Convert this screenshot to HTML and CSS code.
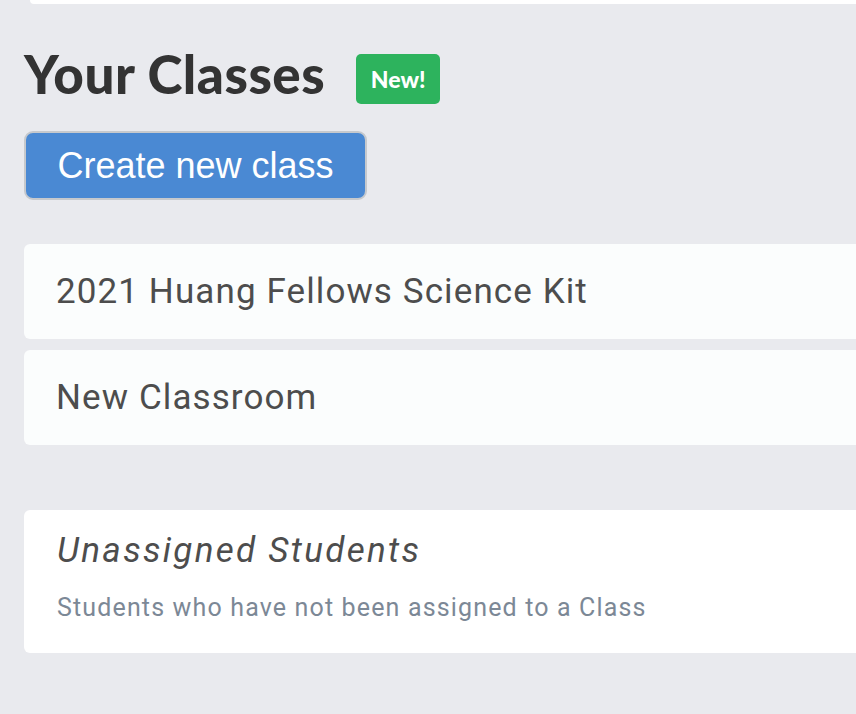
FILE: index.html
```html
<!DOCTYPE html>
<html lang="en">
<head>
<meta charset="utf-8">
<title>Your Classes</title>
<link rel="stylesheet" href="styles.css">
</head>
<body>
<div class="page">
  <div class="top-card"></div>
  <div class="title-row">
    <h1 class="title">Your Classes</h1>
    <span class="badge">New!</span>
  </div>
  <button class="create-btn">Create new class</button>
  <div class="class-list">
    <div class="class-card"><span class="class-name">2021 Huang Fellows Science Kit</span></div>
    <div class="class-card"><span class="class-name">New Classroom</span></div>
  </div>
  <div class="unassigned-card">
    <div class="unassigned-title">Unassigned Students</div>
    <div class="unassigned-sub">Students who have not been assigned to a Class</div>
  </div>
</div>
</body>
</html>
```

FILE: styles.css
```css
html, body {
  margin: 0;
  padding: 0;
  background: #e9eaee;
  overflow: hidden;
}
body {
  width: 856px;
  height: 714px;
  font-family: Roboto, "Open Sans", sans-serif;
}
.page {
  width: 900px;
  padding-left: 24px;
  box-sizing: border-box;
  display: flex;
  flex-direction: column;
  align-items: flex-start;
}
.top-card {
  align-self: stretch;
  height: 4px;
  margin-left: 6px;
  background: #ffffff;
  border-radius: 0 0 0 6px;
}
.title-row {
  display: flex;
  align-items: flex-start;
  gap: 31px;
  margin-top: 50px;
  height: 50px;
}
.title {
  margin: -5px 0 0 0;
  font-family: Lato, sans-serif;
  font-weight: 900;
  font-size: 53px;
  line-height: 50px;
  color: #333333;
  letter-spacing: 0.5px;
}
.badge {
  display: inline-flex;
  align-items: center;
  justify-content: center;
  width: 84px;
  height: 50px;
  border-radius: 5px;
  background: #2db35d;
  color: #ffffff;
  font-family: Lato, sans-serif;
  font-weight: 900;
  font-size: 23px;
}
.create-btn {
  margin-top: 27px;
  width: 343px;
  height: 69px;
  padding: 0;
  border: 2px solid #c6c9cd;
  border-radius: 9px;
  background: #4a89d3;
  color: #ffffff;
  font-family: "Liberation Sans", Arial, sans-serif;
  font-size: 36px;
  text-align: center;
  line-height: 1;
}
.class-list {
  align-self: stretch;
  margin-top: 44px;
  display: flex;
  flex-direction: column;
  gap: 11px;
}
.class-card {
  height: 95px;
  box-sizing: border-box;
  padding: 0 0 0 32px;
  display: flex;
  align-items: center;
  background: #fbfdfd;
  border-radius: 6px 0 0 6px;
}
.class-name {
  font-family: Roboto, sans-serif;
  font-size: 35px;
  color: #4d4d4d;
  line-height: 40px;
  letter-spacing: 1.1px;
}
.unassigned-card {
  align-self: stretch;
  margin-top: 65px;
  height: 143px;
  box-sizing: border-box;
  padding: 21px 0 0 33px;
  background: #ffffff;
  border-radius: 6px 0 0 6px;
}
.unassigned-title {
  font-family: Roboto, sans-serif;
  font-style: italic;
  font-size: 35px;
  line-height: 40px;
  color: #4d4d4d;
  letter-spacing: 2.3px;
}
.unassigned-sub {
  margin-top: 22px;
  font-family: Roboto, sans-serif;
  font-size: 25px;
  line-height: 30px;
  color: #7c8896;
  letter-spacing: 1.15px;
}
```
